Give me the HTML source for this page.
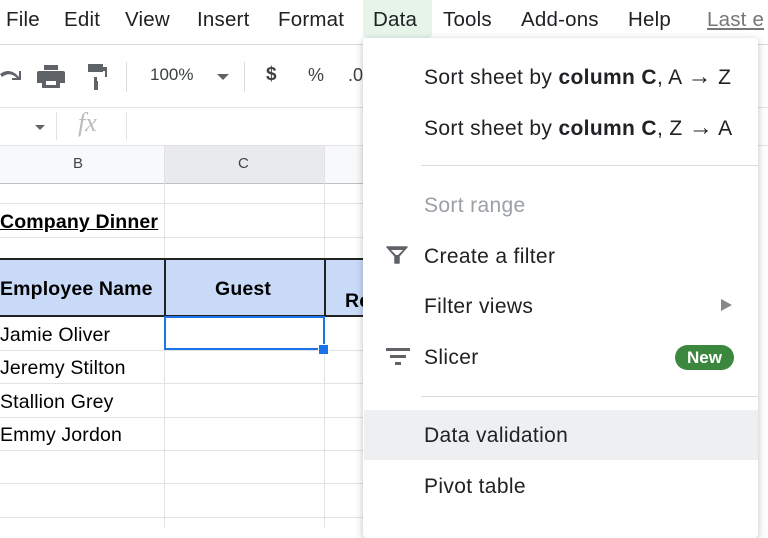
<!DOCTYPE html>
<html><head><meta charset="utf-8"><style>
*{margin:0;padding:0;box-sizing:border-box}
body{width:768px;height:528px;overflow:hidden;position:relative;background:#fff;font-family:"Liberation Sans",Arial,sans-serif;color:#202124}
.a{position:absolute;white-space:nowrap}
.m{font-size:20.5px;top:8px;letter-spacing:0.2px}
.vl{position:absolute;background:#e2e2e2;width:1px}
.hr{position:absolute;background:#e2e2e2;height:1px;left:0;width:363px}
.cell{font-size:19.5px;left:0;letter-spacing:0.15px}
.mi{font-size:21px;left:424px;color:#202124;letter-spacing:0.35px}
</style></head><body>
<!-- menu bar -->
<div class="a" style="left:363px;top:0;width:69px;height:38px;background:#e6f4ea;border-radius:0 0 4px 4px"></div>
<div class="a m" style="left:6px">File</div>
<div class="a m" style="left:64px">Edit</div>
<div class="a m" style="left:125px">View</div>
<div class="a m" style="left:197px">Insert</div>
<div class="a m" style="left:278px">Format</div>
<div class="a m" style="left:373px">Data</div>
<div class="a m" style="left:443px">Tools</div>
<div class="a m" style="left:521px">Add-ons</div>
<div class="a m" style="left:628px">Help</div>
<div class="a m" style="left:707px;color:#777;text-decoration:underline">Last e</div>
<div class="a" style="left:0;top:44px;width:768px;height:1px;background:#dadce0"></div>
<!-- toolbar -->
<svg class="a" style="left:0;top:62px" width="120" height="30" viewBox="0 0 120 30">
<path d="M0 12 Q8 6 16 12 L19 15 L19 9 L21 9 L21 18 L12 18 L12 16 L17 16 Q10 9 2 15Z" fill="#5f6368"/>
<rect x="44" y="3" width="14" height="5" fill="#5f6368"/>
<path d="M39 9 h24 a2 2 0 0 1 2 2 v10 h-5 v5 h-18 v-5 h-5 v-10 a2 2 0 0 1 2 -2z M46 19 v4 h10 v-4z" fill="#5f6368" fill-rule="evenodd"/>
<path d="M88 2 h15 v8 h-15z M103 5 h4 v10 h-10 v4 h1 v9 h-4 v-13 h11 v-6 h-2z" fill="#5f6368"/>
</svg>
<div class="a" style="left:126px;top:62px;width:1px;height:30px;background:#dadce0"></div>
<div class="a" style="left:150px;top:65px;font-size:17px;color:#3c4043">100%</div>
<div class="a" style="left:217px;top:74px;width:0;height:0;border-left:6px solid transparent;border-right:6px solid transparent;border-top:6px solid #5f6368"></div>
<div class="a" style="left:244px;top:62px;width:1px;height:30px;background:#dadce0"></div>
<div class="a" style="left:266px;top:64px;font-size:19px;color:#3c4043;font-weight:bold">$</div>
<div class="a" style="left:308px;top:65px;font-size:18px;color:#3c4043">%</div>
<div class="a" style="left:348px;top:65px;font-size:18px;color:#3c4043">.0</div>
<div class="a" style="left:0;top:107px;width:768px;height:1px;background:#e2e2e2"></div>
<!-- formula bar -->
<div class="a" style="left:35px;top:125px;border-left:5px solid transparent;border-right:5px solid transparent;border-top:5px solid #5f6368"></div>
<div class="a" style="left:56px;top:112px;width:1px;height:28px;background:#e2e2e2"></div>
<div class="a" style="left:78px;top:108px;font-size:26px;font-style:italic;color:#bbb;font-family:'Liberation Serif',serif">fx</div>
<div class="a" style="left:126px;top:112px;width:1px;height:28px;background:#e2e2e2"></div>
<div class="a" style="left:0;top:145px;width:768px;height:1px;background:#e2e2e2"></div>
<!-- col headers -->
<div class="a" style="left:0;top:146px;width:363px;height:37px;background:#f8f9fa"></div>
<div class="a" style="left:164px;top:146px;width:160px;height:37px;background:#e8eaed"></div>
<div class="a" style="left:73px;top:155px;font-size:15px;color:#444">B</div>
<div class="a" style="left:238px;top:155px;font-size:15px;color:#444">C</div>
<div class="a" style="left:0;top:183px;width:363px;height:1px;background:#c0c0c0"></div>
<!-- grid -->
<div class="vl" style="left:164px;top:146px;height:382px"></div>
<div class="vl" style="left:324px;top:146px;height:382px"></div>
<div class="hr" style="top:203px"></div>
<div class="hr" style="top:237px"></div>
<div class="hr" style="top:350px"></div>
<div class="hr" style="top:383px"></div>
<div class="hr" style="top:417px"></div>
<div class="hr" style="top:450px"></div>
<div class="hr" style="top:483px"></div>
<div class="hr" style="top:517px"></div>
<div class="a" style="left:0;top:258px;width:363px;height:58px;background:#c9daf8"></div>
<div class="a" style="left:0;top:258px;width:363px;height:2px;background:#222"></div>
<div class="a" style="left:0;top:315px;width:363px;height:2px;background:#222"></div>
<div class="a" style="left:164px;top:258px;width:2px;height:58px;background:#222"></div>
<div class="a" style="left:324px;top:258px;width:2px;height:58px;background:#222"></div>
<div class="a cell" style="top:211px;font-weight:bold;text-decoration:underline;color:#000">Company Dinner</div>
<div class="a cell" style="top:278px;font-weight:bold;color:#000">Employee Name</div>
<div class="a cell" style="top:278px;left:215px;font-weight:bold;color:#000">Guest</div>
<div class="a cell" style="top:290px;left:345px;font-weight:bold;color:#000">Re</div>
<div class="a cell" style="top:324px;color:#000">Jamie Oliver</div>
<div class="a cell" style="top:357px;color:#000">Jeremy Stilton</div>
<div class="a cell" style="top:391px;color:#000">Stallion Grey</div>
<div class="a cell" style="top:424px;color:#000">Emmy Jordon</div>
<div class="a" style="left:164px;top:316px;width:161px;height:34px;border:2px solid #1a73e8"></div>
<div class="a" style="left:318px;top:344px;width:11px;height:11px;background:#1a73e8;border:1px solid #fff"></div>
<!-- dropdown -->
<div class="a" style="left:363px;top:38px;width:395px;height:500px;background:#fff;border-radius:4px;box-shadow:0 2px 8px rgba(0,0,0,.25)"></div>
<div class="a mi" style="top:65px">Sort sheet by <b>column C</b>, A <span style="font-size:24px;line-height:1">→</span> Z</div>
<div class="a mi" style="top:116px">Sort sheet by <b>column C</b>, Z <span style="font-size:24px;line-height:1">→</span> A</div>
<div class="a" style="left:421px;top:165px;width:337px;height:1px;background:#dadce0"></div>
<div class="a mi" style="top:194px;color:#9aa0a6">Sort range</div>
<svg class="a" style="left:386px;top:246px" width="22" height="20" viewBox="0 0 22 20"><path d="M1 1 H21 L13 10 V17 H9 V10 Z" fill="#5f6368" stroke="#5f6368" stroke-width="1.5" stroke-linejoin="round"/><path d="M5 4 H17 L12 9 H10 Z" fill="#fff"/></svg>
<div class="a mi" style="top:245px">Create a filter</div>
<div class="a mi" style="top:295px">Filter views</div>
<div class="a" style="left:721px;top:299px;border-top:6px solid transparent;border-bottom:6px solid transparent;border-left:11px solid #888"></div>
<svg class="a" style="left:386px;top:348px" width="24" height="18" viewBox="0 0 24 18"><rect x="0" y="0" width="24" height="3" fill="#5f6368"/><rect x="4" y="7" width="16" height="3" fill="#5f6368"/><rect x="9" y="14" width="6" height="3" fill="#5f6368"/></svg>
<div class="a mi" style="top:346px">Slicer</div>
<div class="a" style="left:675px;top:345px;width:59px;height:25px;border-radius:13px;background:#3b873e;color:#fff;font-size:17px;font-weight:bold;text-align:center;line-height:25px">New</div>
<div class="a" style="left:421px;top:396px;width:337px;height:1px;background:#dadce0"></div>
<div class="a" style="left:364px;top:410px;width:394px;height:50px;background:#eeeff1"></div>
<div class="a mi" style="top:424px">Data validation</div>
<div class="a mi" style="top:475px">Pivot table</div>
</body></html>
